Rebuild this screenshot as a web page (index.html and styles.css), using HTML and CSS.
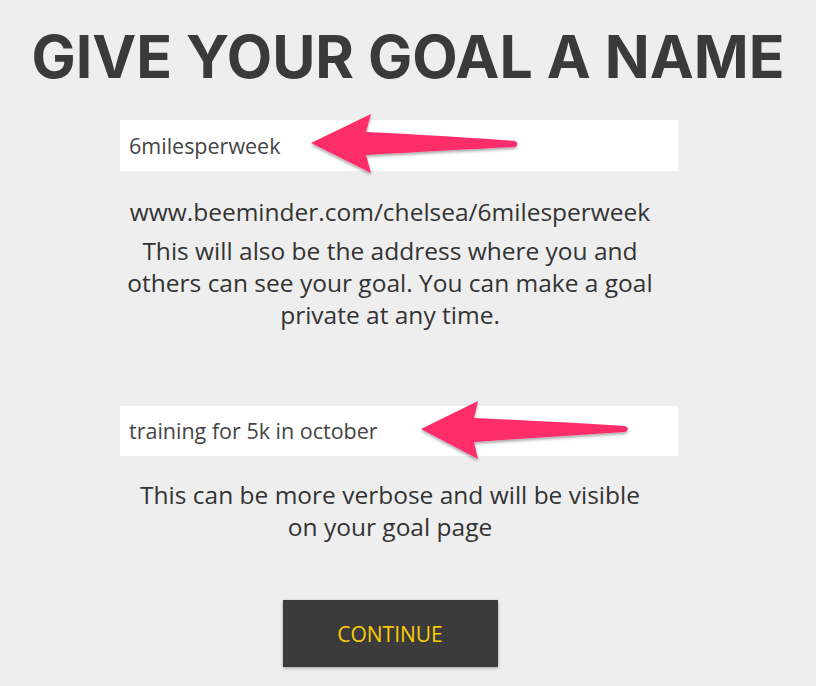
FILE: index.html
```html
<!DOCTYPE html>
<html>
<head>
<meta charset="utf-8">
<link rel="stylesheet" href="styles.css">
</head>
<body>
<div class="page">
  <h1 class="title">GIVE YOUR GOAL A NAME</h1>
  <div class="column">
    <div class="field">6milesperweek</div>
    <p class="url">www.beeminder.com/chelsea/6milesperweek</p>
    <p class="help">This will also be the address where you and others can see your goal. You can make a goal private at any time.</p>
    <div class="field field-second">training for 5k in october</div>
    <p class="help help-second">This can be more verbose and will be visible on your goal page</p>
    <div class="actions"><button class="btn">CONTINUE</button></div>
  </div>
  <svg class="arrows" width="816" height="686" viewBox="0 0 816 686">
    <defs>
      <filter id="sh" x="-20%" y="-40%" width="140%" height="180%">
        <feDropShadow dx="0" dy="2" stdDeviation="1.5" flood-color="#000" flood-opacity="0.35"/>
      </filter>
    </defs>
    <path filter="url(#sh)" fill="#ff2d6b" d="M311 143 L371 114 L366 132 Q450 136 515 141 Q520 144 515 147 Q450 150 366 155 L371 173 Z"/>
    <path filter="url(#sh)" fill="#ff2d6b" d="M421 429 L478 401 L474 418 Q560 422 625 426 Q631 429 625 432 Q560 436 474 442 L478 459 Z"/>
  </svg>
</div>
</body>
</html>
```
FILE: styles.css
```css
html, body {
  margin: 0;
  padding: 0;
  background: #eeeeee;
}
.page {
  position: relative;
  width: 816px;
  height: 686px;
  overflow: hidden;
  font-family: "Open Sans", "Noto Sans", sans-serif;
  color: #333333;
}
.title {
  margin: 27px 0 0;
  font-family: "Inter", "DejaVu Sans", sans-serif;
  font-weight: 700;
  font-size: 59px;
  line-height: 59px;
  text-align: center;
  color: #3a3a3a;
}
.column {
  margin: 34px 0 0 120px;
  width: 540px;
  text-align: center;
}
.field {
  box-sizing: border-box;
  width: 558px;
  height: 51px;
  background: #ffffff;
  padding: 0 9px;
  font-size: 21.5px;
  line-height: 51px;
  color: #444444;
  text-align: left;
}
.url {
  margin: 25px 0 7px;
  font-size: 24.5px;
  line-height: 32px;
}
.help {
  margin: 0;
  padding: 0 5px;
  font-size: 24.5px;
  line-height: 32px;
}
.field-second {
  margin-top: 75px;
  height: 50px;
  line-height: 50px;
}
.help-second {
  margin-top: 23px;
}
.actions {
  margin-top: 57px;
  display: flex;
  justify-content: center;
}
.btn {
  width: 215px;
  height: 67px;
  border: none;
  background: #3b3b3b;
  color: #fdcc05;
  font-family: "Open Sans", "Noto Sans", sans-serif;
  font-size: 21px;
  box-shadow: 0 1px 3px rgba(0, 0, 0, 0.35);
  padding: 0;
}
.arrows {
  position: absolute;
  left: 0;
  top: 0;
  pointer-events: none;
}
```
